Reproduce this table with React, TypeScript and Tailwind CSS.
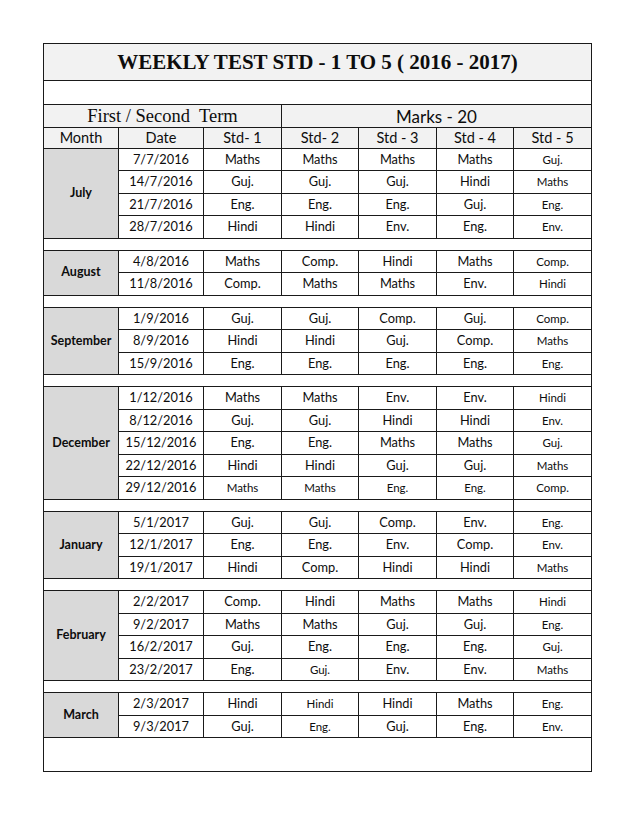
import React from "react";

type Row = { date: string; subs: string[] };
type Group = { month: string; rows: Row[] };

// "*" prefix marks a smaller-printed cell
const groups: Group[] = [
  {
    month: "July",
    rows: [
      { date: "7/7/2016", subs: ["Maths", "Maths", "Maths", "Maths", "*Guj."] },
      { date: "14/7/2016", subs: ["Guj.", "Guj.", "Guj.", "Hindi", "*Maths"] },
      { date: "21/7/2016", subs: ["Eng.", "Eng.", "Eng.", "Guj.", "*Eng."] },
      { date: "28/7/2016", subs: ["Hindi", "Hindi", "Env.", "Eng.", "*Env."] },
    ],
  },
  {
    month: "August",
    rows: [
      { date: "4/8/2016", subs: ["Maths", "Comp.", "Hindi", "Maths", "*Comp."] },
      { date: "11/8/2016", subs: ["Comp.", "Maths", "Maths", "Env.", "*Hindi"] },
    ],
  },
  {
    month: "September",
    rows: [
      { date: "1/9/2016", subs: ["Guj.", "Guj.", "Comp.", "Guj.", "*Comp."] },
      { date: "8/9/2016", subs: ["Hindi", "Hindi", "Guj.", "Comp.", "*Maths"] },
      { date: "15/9/2016", subs: ["Eng.", "Eng.", "Eng.", "Eng.", "*Eng."] },
    ],
  },
  {
    month: "December",
    rows: [
      { date: "1/12/2016", subs: ["Maths", "Maths", "Env.", "Env.", "*Hindi"] },
      { date: "8/12/2016", subs: ["Guj.", "Guj.", "Hindi", "Hindi", "*Env."] },
      { date: "15/12/2016", subs: ["Eng.", "Eng.", "Maths", "Maths", "*Guj."] },
      { date: "22/12/2016", subs: ["Hindi", "Hindi", "Guj.", "Guj.", "*Maths"] },
      { date: "29/12/2016", subs: ["*Maths", "*Maths", "*Eng.", "*Eng.", "*Comp."] },
    ],
  },
  {
    month: "January",
    rows: [
      { date: "5/1/2017", subs: ["Guj.", "Guj.", "Comp.", "Env.", "*Eng."] },
      { date: "12/1/2017", subs: ["Eng.", "Eng.", "Env.", "Comp.", "*Env."] },
      { date: "19/1/2017", subs: ["Hindi", "Comp.", "Hindi", "Hindi", "*Maths"] },
    ],
  },
  {
    month: "February",
    rows: [
      { date: "2/2/2017", subs: ["Comp.", "Hindi", "Maths", "Maths", "*Hindi"] },
      { date: "9/2/2017", subs: ["Maths", "Maths", "Guj.", "Guj.", "*Eng."] },
      { date: "16/2/2017", subs: ["Guj.", "Eng.", "Eng.", "Eng.", "*Guj."] },
      { date: "23/2/2017", subs: ["Eng.", "*Guj.", "Env.", "Env.", "*Maths"] },
    ],
  },
  {
    month: "March",
    rows: [
      { date: "2/3/2017", subs: ["Hindi", "*Hindi", "Hindi", "Maths", "*Eng."] },
      { date: "9/3/2017", subs: ["Guj.", "*Eng.", "Guj.", "Eng.", "*Env."] },
    ],
  },
];

const bd = "border-[1.5px] border-solid border-[#1a1a1a]";

export default function App() {
  return (
    <div className="bg-white w-[638px] h-[826px] pt-[43px] pl-[43px] text-[#0d0d0d]">
      <table
        className="table-fixed border-collapse w-[548px] border-[1.5px] border-solid border-[#1a1a1a]"
        style={{ fontFamily: "Lato, 'Noto Sans', sans-serif" }}
      >
        <colgroup>
          <col className="w-[75px]" />
          <col className="w-[85px]" />
          <col className="w-[78px]" />
          <col className="w-[77px]" />
          <col className="w-[78px]" />
          <col className="w-[77px]" />
          <col className="w-[78px]" />
        </colgroup>
        <tbody>
          <tr className="h-[37px]">
            <td
              colSpan={7}
              className={`${bd} bg-[#f2f2f2] text-center font-bold text-[21px] leading-none p-0`}
              style={{ fontFamily: "'Liberation Serif', 'Times New Roman', serif" }}
            >
              WEEKLY TEST STD - 1 TO 5 ( 2016 - 2017)
            </td>
          </tr>
          <tr className="h-[24px]">
            <td colSpan={7} className={`${bd} bg-white p-0`}></td>
          </tr>
          <tr className="h-[23px]">
            <td
              colSpan={3}
              className={`${bd} bg-[#f2f2f2] text-center text-[18.5px] leading-none p-0 whitespace-pre`}
              style={{ fontFamily: "'Liberation Serif', 'Times New Roman', serif" }}
            >
              First / Second  Term
            </td>
            <td colSpan={4} className={`${bd} bg-[#f2f2f2] text-center text-[17px] leading-none p-0`}>
              Marks - 20
            </td>
          </tr>
          <tr className="h-[20.5px]">
            {["Month", "Date", "Std- 1", "Std- 2", "Std - 3", "Std - 4", "Std - 5"].map((h) => (
              <td key={h} className={`${bd} bg-[#f2f2f2] text-center text-[14.5px] leading-none p-0`}>
                {h}
              </td>
            ))}
          </tr>
          {groups.map((g, gi) => (
            <React.Fragment key={g.month}>
              {g.rows.map((r, ri) => (
                <tr key={r.date} className="h-[22.5px]">
                  {ri === 0 && (
                    <td
                      rowSpan={g.rows.length}
                      className={`${bd} bg-[#d9d9d9] text-center font-bold text-[12.5px] leading-none p-0`}
                    >
                      {g.month}
                    </td>
                  )}
                  <td className={`${bd} text-center text-[12.8px] leading-none p-0`}>{r.date}</td>
                  {r.subs.map((s, si) => {
                    const small = s.startsWith("*");
                    const t = small ? s.slice(1) : s;
                    return (
                      <td
                        key={si}
                        className={`${bd} text-center leading-none p-0 ${small ? "text-[11.5px]" : "text-[12.8px]"}`}
                      >
                        {t}
                      </td>
                    );
                  })}
                </tr>
              ))}
              {gi < groups.length - 1 &&
                (g.month === "December" ? (
                  <tr className="h-[12px]">
                    <td colSpan={6} className={`${bd} p-0`}></td>
                    <td className={`${bd} p-0`}></td>
                  </tr>
                ) : (
                  <tr className="h-[12px]">
                    <td colSpan={7} className={`${bd} p-0`}></td>
                  </tr>
                ))}
            </React.Fragment>
          ))}
          <tr className="h-[34px]">
            <td colSpan={7} className={`${bd} p-0`}></td>
          </tr>
        </tbody>
      </table>
    </div>
  );
}
